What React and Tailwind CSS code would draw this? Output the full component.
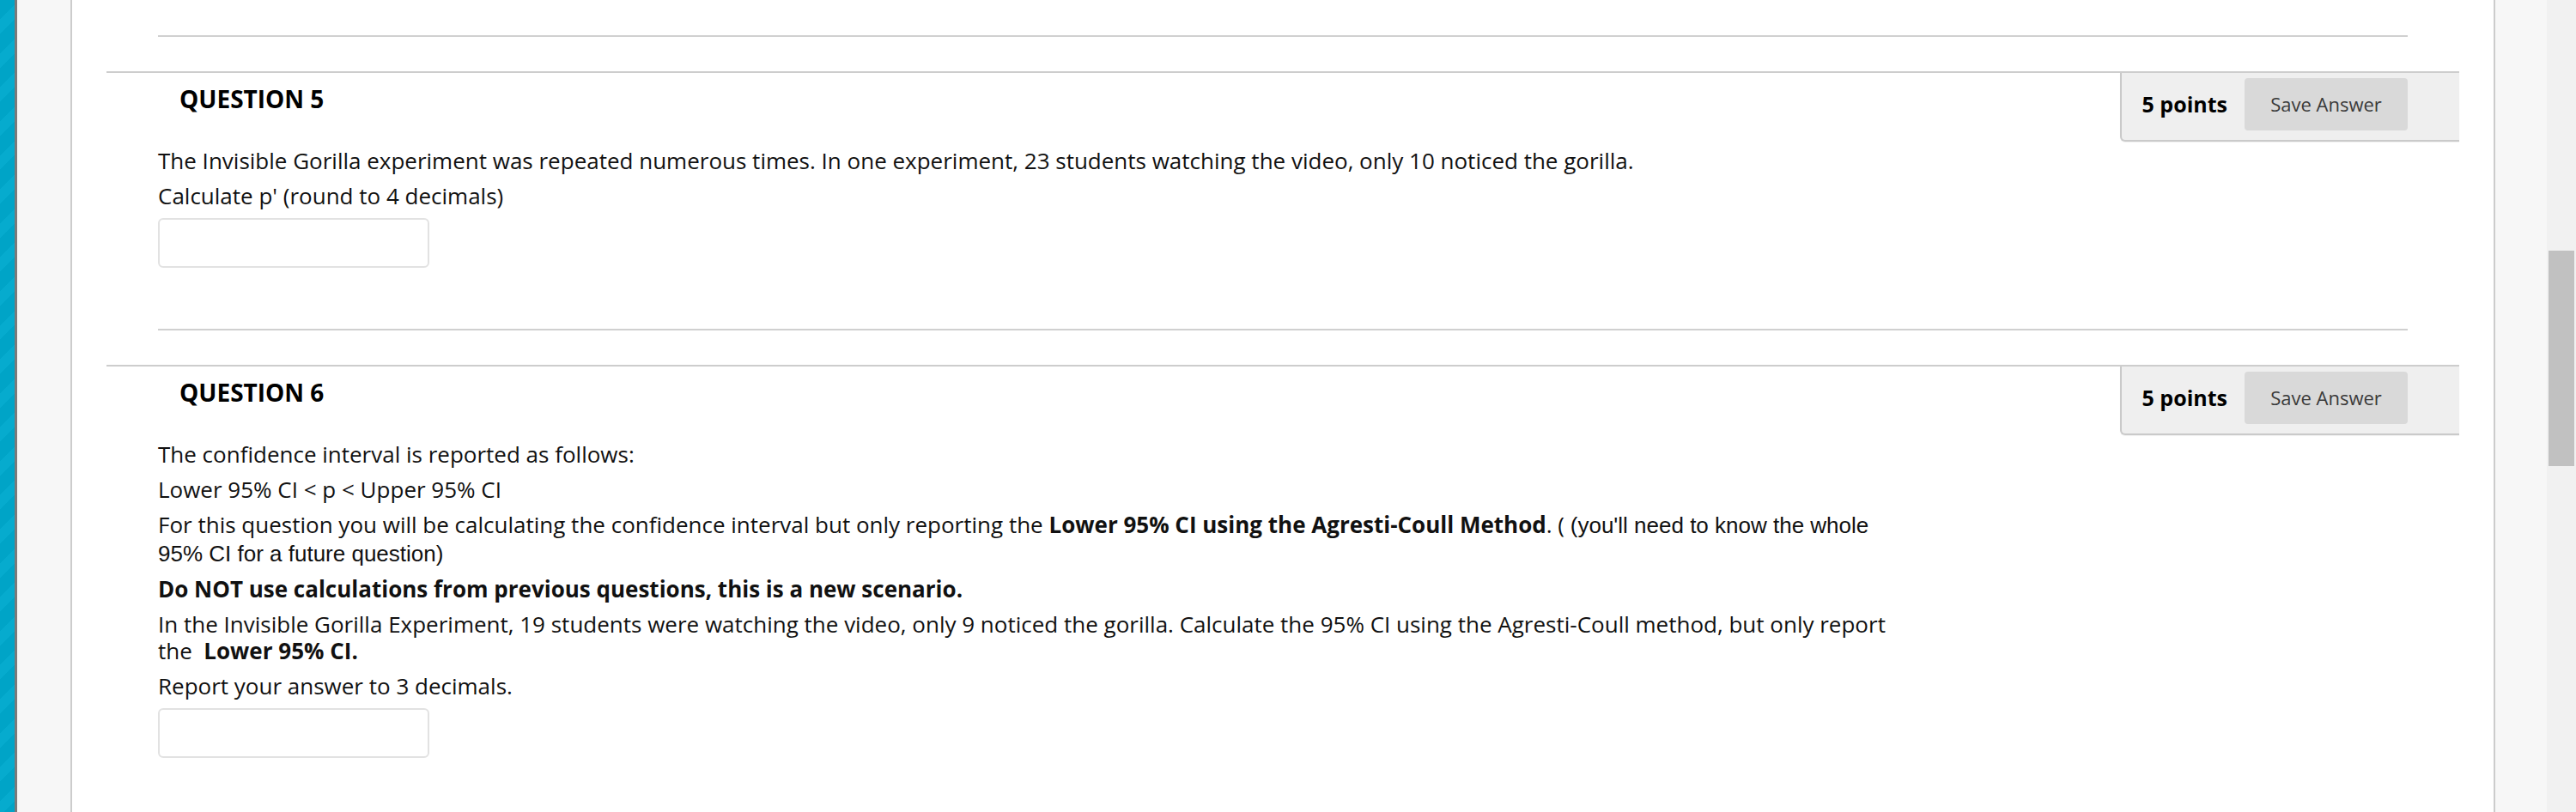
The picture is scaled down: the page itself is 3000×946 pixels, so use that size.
import React from 'react';

const sans = "font-['Open_Sans',sans-serif]";

function Question({ number, children }) {
  return (
    <div>
      <div className="mx-[60px] h-[2px] bg-[#d0d0d0]" />
      <div className="mt-[40px] flex items-start justify-between border-t-2 border-[#cdcdcd]">
        <h2 className="pl-[85px] pt-[16px] text-[28px] leading-[28px] font-bold text-black">
          QUESTION {number}
        </h2>
        <div className="flex items-center gap-[20px] rounded-bl-[6px] border-b-2 border-l-2 border-[#cacaca] bg-[#efefef] pt-[6px] pb-[11px] pl-[24px] pr-[60px] shadow-[0_1px_1px_rgba(0,0,0,0.06)]">
          <span className="text-[25px] font-bold text-black">5 points</span>
          <button className="h-[61px] w-[190px] rounded-[4px] bg-[#d9d9d9] text-[22px] text-[#3a3a3a]">
            Save Answer
          </button>
        </div>
      </div>
      <div className="flex w-[2090px] flex-col gap-[9.5px] pt-[7px] pl-[60px] text-[26px] leading-[31.5px] text-[#111]">
        {children}
        <div className="h-[58px] w-[316px] rounded-[6px] border-2 border-[#e2e2e2] bg-white" />
      </div>
      <div className="h-[71px]" />
    </div>
  );
}

export default function App() {
  return (
    <div className={`flex h-[946px] w-[3000px] overflow-hidden bg-white ${sans}`}>
      {/* left rail */}
      <div className="w-[17px] bg-[repeating-linear-gradient(135deg,#00a4c7_0px,#00a4c7_16px,#06abce_16px,#06abce_28px)]" />
      <div className="w-[3px] bg-[#7a7a7a]" />
      <div className="w-[64px] border-r-2 border-[#cccccc] bg-[#f7f7f7]" />

      {/* content */}
      <main className="flex-1 px-[40px] pt-[41px]">
        <Question number={5}>
          <p>
            The Invisible Gorilla experiment was repeated numerous times. In one experiment, 23 students watching the
            video, only 10 noticed the gorilla.
          </p>
          <p>Calculate p' (round to 4 decimals)</p>
        </Question>

        <Question number={6}>
          <p>The confidence interval is reported as follows:</p>
          <p>Lower 95% CI &lt; p &lt; Upper 95% CI</p>
          <p>
            For this question you will be calculating the confidence interval but only reporting the{' '}
            <strong>Lower 95% CI using the Agresti-Coull Method</strong>. ({' '}
            <span className="font-['Liberation_Sans',Arial,sans-serif]">
              (you'll need to know the whole 95% CI for a future question)
            </span>
          </p>
          <p className="font-bold">Do NOT use calculations from previous questions, this is a new scenario.</p>
          <p>
            In the Invisible Gorilla Experiment, 19 students were watching the video, only 9 noticed the gorilla.
            Calculate the 95% CI using the Agresti-Coull method, but only report the{'\u00a0 '}
            <strong>Lower 95% CI.</strong>
          </p>
          <p>Report your answer to 3 decimals.</p>
        </Question>
      </main>

      {/* right rail + scrollbar */}
      <div className="w-[62px] border-l-2 border-[#cccccc] bg-[#f7f7f7]" />
      <div className="w-[34px] bg-[#f1f1f1] px-[2px] pt-[292px]">
        <div className="h-[251px] bg-[#c1c1c1]" />
      </div>
    </div>
  );
}
